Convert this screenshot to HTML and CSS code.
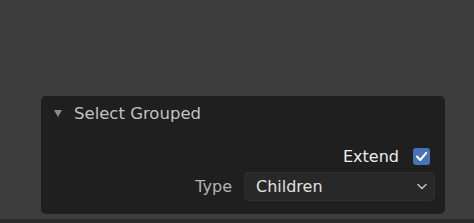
FILE: index.html
```html
<!DOCTYPE html>
<html>
<head>
<meta charset="utf-8">
<link rel="stylesheet" href="styles.css">
</head>
<body>
<div class="area">
  <div class="panel">
    <div class="header">
      <svg class="tri" width="8" height="7" viewBox="0 0 8 7"><polygon points="0,0 8,0 4,7" fill="#8c8c8c"/></svg>
      <span class="title">Select Grouped</span>
    </div>
    <div class="row extend-row">
      <span class="label-bright">Extend</span>
      <span class="check">
        <svg width="17" height="17" viewBox="0 0 17 17"><polyline points="4,8.5 7.3,12 13.2,4.8" fill="none" stroke="#fff" stroke-width="2" stroke-linecap="round" stroke-linejoin="round"/></svg>
      </span>
    </div>
    <div class="row type-row">
      <span class="label">Type</span>
      <div class="select">
        <span>Children</span>
        <svg width="10" height="7" viewBox="0 0 10 7"><polyline points="1,1.5 5,5.5 9,1.5" fill="none" stroke="#bdbdbd" stroke-width="1.6" stroke-linecap="round" stroke-linejoin="round"/></svg>
      </div>
    </div>
  </div>
</div>
<div class="bottom"></div>
</body>
</html>
```
FILE: styles.css
```css
html, body {
  margin: 0;
  padding: 0;
  background: #3d3d3d;
  font-family: "DejaVu Sans", "Open Sans", sans-serif;
  width: 474px;
  height: 223px;
  overflow: hidden;
}
.area {
  height: 219px;
  padding-top: 96px;
  padding-left: 41px;
  box-sizing: border-box;
}
.panel {
  width: 404px;
  height: 118px;
  background: #1f1f1f;
  border-radius: 5px;
  box-sizing: border-box;
  padding: 0 10px 0 13px;
  display: flex;
  flex-direction: column;
}
.header {
  height: 34px;
  display: flex;
  align-items: center;
  gap: 12px;
}
.tri { margin-top: 1px; }
.title {
  color: #c2c2c2;
  font-size: 16.5px;
}
.row {
  display: flex;
  align-items: center;
  justify-content: flex-end;
}
.extend-row {
  margin-top: 11px;
  height: 30px;
  gap: 14px;
  padding-right: 5px;
}
.label-bright {
  color: #ececec;
  font-size: 16px;
}
.check {
  width: 17px;
  height: 17px;
  background: #4772b3;
  border-radius: 3px;
  display: flex;
}
.type-row {
  height: 31px;
  gap: 12px;
}
.label {
  color: #b4b4b4;
  font-size: 16px;
}
.select {
  width: 191px;
  height: 29px;
  box-sizing: border-box;
  background: #282828;
  border: 1px solid #2e2e2e;
  border-radius: 4px;
  display: flex;
  align-items: center;
  justify-content: space-between;
  padding: 0 7px 0 11px;
  color: #e0e0e0;
  font-size: 16px;
}
.bottom {
  height: 4px;
  background: #2b2b2b;
}
```
